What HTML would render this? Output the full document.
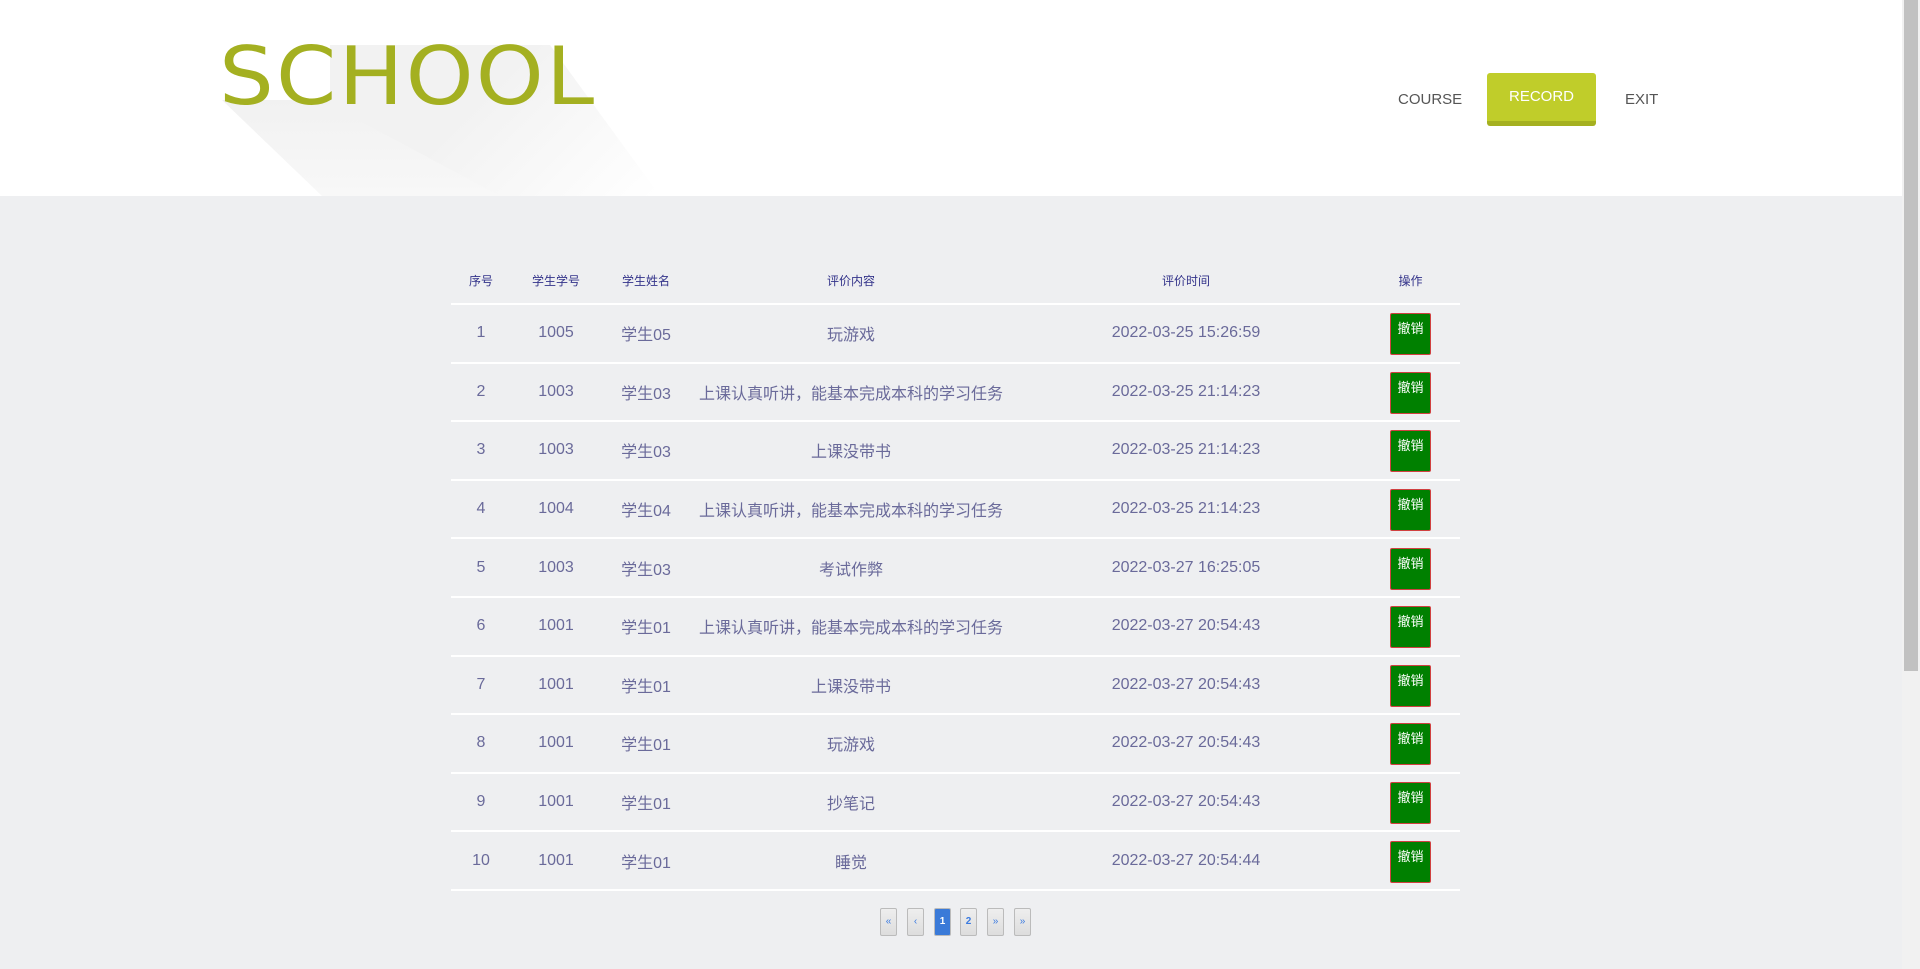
<!DOCTYPE html>
<html><head><meta charset="utf-8"><style>
*{margin:0;padding:0;box-sizing:border-box}
body{width:1920px;height:969px;overflow:hidden;background:#eeeff1;font-family:"Liberation Sans","Noto Sans CJK SC",sans-serif;position:relative}
.hdr{position:absolute;left:0;top:0;width:1902px;height:196px;background:#fff;overflow:hidden}
.shadow{position:absolute;left:222px;top:100px;width:400px;height:96px;background:linear-gradient(180deg,#f1f1f1,#f8f8f8);clip-path:polygon(0 0,330px 0,440px 96px,100px 96px)}
.shadow2{position:absolute;left:330px;top:45px;width:350px;height:151px;background:linear-gradient(135deg,#f2f2f2 40%,#fff 95%);clip-path:polygon(0 0,220px 0,330px 151px,170px 151px,0 60px)}
.logo{position:absolute;left:219px;top:30px;font-size:80px;color:#a4b021;font-family:"DejaVu Sans",sans-serif;letter-spacing:2px;transform:scaleX(1.08);transform-origin:left}
.nav{position:absolute;top:73px;font-size:15px;color:#555;line-height:53px}
.rec{position:absolute;left:1487px;top:73px;width:109px;height:53px;background:#c0cd2a;border-bottom:5px solid #a5b020;border-radius:3px;color:#fff;font-size:15px;text-align:center;line-height:48px}
.sb{position:absolute;right:0;top:0;width:18px;height:969px;background:#f1f1f1}
.sb div{position:absolute;left:2px;top:0;width:14px;height:671px;background:#c1c1c1}
table{position:absolute;left:451px;top:258px;width:1009px;border-collapse:collapse}
th{font-weight:normal;font-size:12px;color:#33338a;height:46px;border-bottom:2px solid #fff}
td{font-size:16px;color:#6a6a9a;height:58.6px;text-align:center;border-bottom:2px solid #fff}
.b{display:inline-block;width:41px;height:42px;background:#008000;border:1px solid #d04040;border-radius:2px;color:#fff;font-size:13px;vertical-align:top;padding-top:4px;margin-top:2px}
.pg{position:absolute;top:908px;height:28px;width:17px;border:1px solid #bbb;border-radius:2px;background:linear-gradient(#eee,#ddd);color:#3a7ae0;font-size:10px;text-align:center;line-height:26px}
</style></head><body>
<div class="hdr">
<div class="shadow"></div><div class="shadow2"></div>
<div class="logo">SCHOOL</div>
<div class="nav" style="left:1398px">COURSE</div>
<div class="rec">RECORD</div>
<div class="nav" style="left:1625px">EXIT</div>
</div>
<table>
<tr><th style="width:60px">序号</th><th style="width:90px">学生学号</th><th style="width:90px">学生姓名</th><th style="width:320px">评价内容</th><th style="width:350px">评价时间</th><th>操作</th></tr>
<tr><td>1</td><td>1005</td><td>学生05</td><td>玩游戏</td><td>2022-03-25 15:26:59</td><td><span class="b">撤销</span></td></tr>
<tr><td>2</td><td>1003</td><td>学生03</td><td>上课认真听讲，能基本完成本科的学习任务</td><td>2022-03-25 21:14:23</td><td><span class="b">撤销</span></td></tr>
<tr><td>3</td><td>1003</td><td>学生03</td><td>上课没带书</td><td>2022-03-25 21:14:23</td><td><span class="b">撤销</span></td></tr>
<tr><td>4</td><td>1004</td><td>学生04</td><td>上课认真听讲，能基本完成本科的学习任务</td><td>2022-03-25 21:14:23</td><td><span class="b">撤销</span></td></tr>
<tr><td>5</td><td>1003</td><td>学生03</td><td>考试作弊</td><td>2022-03-27 16:25:05</td><td><span class="b">撤销</span></td></tr>
<tr><td>6</td><td>1001</td><td>学生01</td><td>上课认真听讲，能基本完成本科的学习任务</td><td>2022-03-27 20:54:43</td><td><span class="b">撤销</span></td></tr>
<tr><td>7</td><td>1001</td><td>学生01</td><td>上课没带书</td><td>2022-03-27 20:54:43</td><td><span class="b">撤销</span></td></tr>
<tr><td>8</td><td>1001</td><td>学生01</td><td>玩游戏</td><td>2022-03-27 20:54:43</td><td><span class="b">撤销</span></td></tr>
<tr><td>9</td><td>1001</td><td>学生01</td><td>抄笔记</td><td>2022-03-27 20:54:43</td><td><span class="b">撤销</span></td></tr>
<tr><td>10</td><td>1001</td><td>学生01</td><td>睡觉</td><td>2022-03-27 20:54:44</td><td><span class="b">撤销</span></td></tr>
</table>
<div class="pg" style="left:880px">«</div>
<div class="pg" style="left:907px">‹</div>
<div class="pg" style="left:934px;background:#3a7ad8;color:#fff;font-weight:bold">1</div>
<div class="pg" style="left:960px;font-weight:bold">2</div>
<div class="pg" style="left:987px">»</div>
<div class="pg" style="left:1014px">»</div>
<div class="sb"><div></div></div>
</body></html>
